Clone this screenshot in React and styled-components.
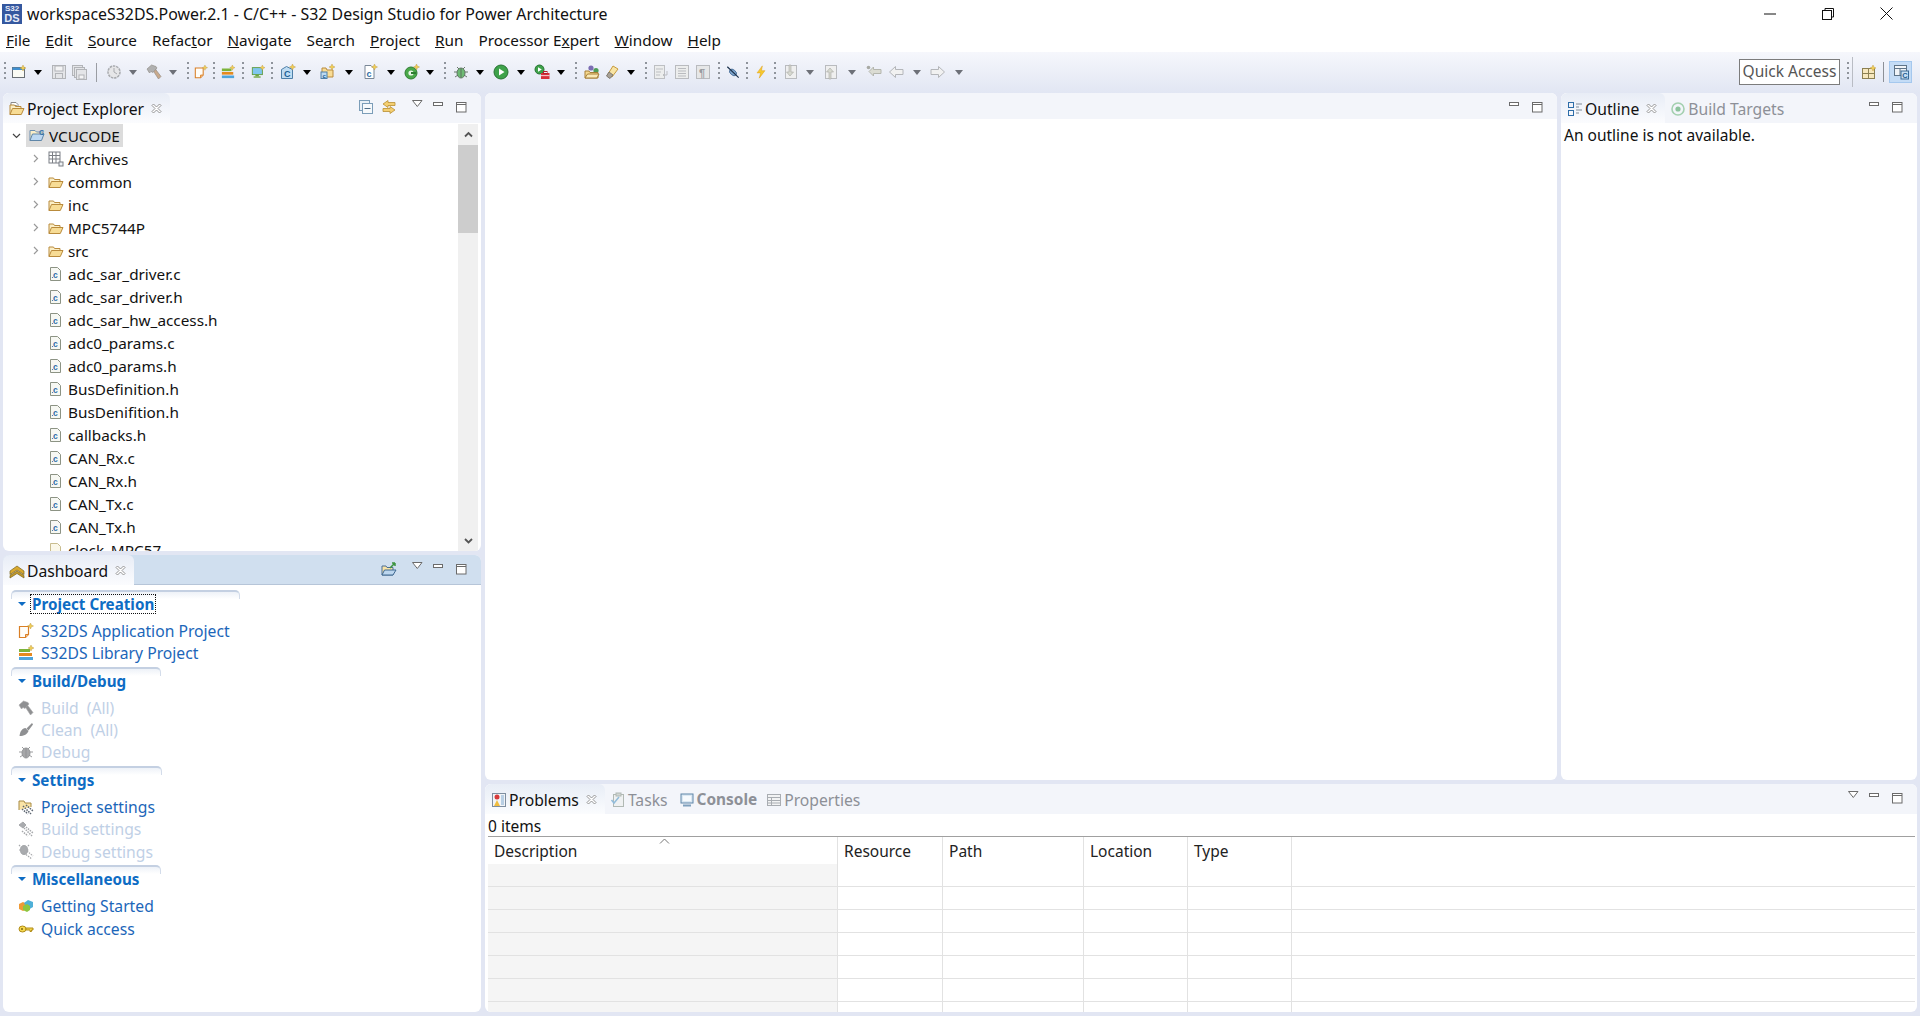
import React from 'react';
import styled, { createGlobalStyle } from 'styled-components';

const Global = createGlobalStyle`
  html, body { margin: 0; padding: 0; background: #fff; }
  body { font-family: "Noto Sans", "Open Sans", sans-serif; font-size: 15.5px; color: #111; }
  * { box-sizing: border-box; }
`;

const Frame = styled.div`
  width: 1920px;
  height: 1016px;
  display: flex;
  flex-direction: column;
  overflow: hidden;
  background: #e2e6f3;
`;

const TitleBar = styled.div`
  height: 27px;
  flex: none;
  display: flex;
  align-items: center;
  background: #fff;
  padding-left: 2px;
  font-size: 15.9px;
`;

const AppLogo = styled.div`
  width: 20px;
  height: 20px;
  margin-right: 5px;
  background: #35589f;
  color: #e6ebf7;
  font-size: 8px;
  font-weight: 700;
  line-height: 8px;
  text-align: center;
  padding-top: 1px;
  font-family: "Liberation Sans", sans-serif;
`;

const LogoBig = styled.div`
  font-size: 11px;
  line-height: 10px;
`;

const WinControls = styled.div`
  margin-left: auto;
  display: flex;
  height: 100%;
  padding-right: 4px;
`;

const WinButton = styled.div`
  width: 58.5px;
  display: flex;
  align-items: center;
  justify-content: center;
`;

const MenuBar = styled.div`
  height: 25px;
  flex: none;
  display: flex;
  align-items: center;
  gap: 15px;
  padding: 1px 0 0 6px;
  background: #fff;
  font-size: 15.3px;
`;

const ToolBar = styled.div`
  height: 41px;
  flex: none;
  display: flex;
  align-items: center;
  background: linear-gradient(#f6f7fc, #e1e6f3);
  padding-bottom: 1px;
`;

const ToolSlot = styled.div`
  flex: none;
  width: ${p => p.$w}px;
  height: 24px;
  display: flex;
  align-items: center;
  justify-content: center;
`;

const Grip = styled.div`
  width: 2px;
  height: 20px;
  background: repeating-linear-gradient(#8f949c 0 2px, transparent 2px 5px);
`;

const ToolLine = styled.div`
  width: 1px;
  height: 19px;
  background: #9a9da3;
`;

const DropArrow = styled.div`
  width: 0;
  height: 0;
  border-left: 4.5px solid transparent;
  border-right: 4.5px solid transparent;
  border-top: 5px solid ${p => (p.$off ? '#6d7078' : '#000')};
`;

const QuickArea = styled.div`
  margin-left: auto;
  display: flex;
  align-items: center;
  padding-right: 8px;
`;

const QuickAccess = styled.div`
  width: 101px;
  height: 26px;
  border: 1px solid #7c7c7c;
  background: #fff;
  color: #555;
  font-size: 15.5px;
  line-height: 23px;
  text-align: center;
  white-space: nowrap;
`;

const PerspectiveGrip = styled.div`
  width: 10px;
  height: 30px;
  margin: 0 4px 0 3px;
  border-right: 1px solid #b9bcc4;
  display: flex;
  justify-content: center;
  align-items: center;
`;

const PerspectiveLine = styled.div`
  width: 1px;
  height: 20px;
  background: #8d9097;
  margin: 0 5px 0 3px;
`;

const PerspectiveBtn = styled.div`
  width: 23px;
  height: 22px;
  display: flex;
  align-items: center;
  justify-content: center;
  background: ${p => (p.$on ? '#c4dcf6' : 'transparent')};
  border: 1px solid ${p => (p.$on ? '#a5c8ee' : 'transparent')};
`;

const Workbench = styled.div`
  flex: 1;
  min-height: 0;
  display: grid;
  grid-template-columns: 478px 1fr;
  gap: 4px;
  padding: 0 3px 4px;
`;

const Column = styled.div`
  display: grid;
  min-height: 0;
  min-width: 0;
  grid-template-rows: ${p => p.$rows};
  gap: ${p => p.$gap}px;
`;

const EditorRow = styled.div`
  display: grid;
  min-height: 0;
  grid-template-columns: 1072px 1fr;
  gap: 4px;
`;

const Panel = styled.section`
  background: #fff;
  border-radius: 6px;
  overflow: hidden;
  display: flex;
  flex-direction: column;
  min-height: 0;
  min-width: 0;
`;

const PanelHead = styled.header`
  height: 30px;
  flex: none;
  display: flex;
  background: ${p => (p.$focus ? '#d0dfef' : '#f3f5fa')};
  border-bottom: ${p => (p.$focus ? '1px solid #b6c5d8' : 'none')};
`;

const Tab = styled.div`
  height: 30px;
  display: flex;
  align-items: center;
  padding: 1px ${p => (p.$active ? '8px' : '0')} 0 ${p => p.$pad || 6}px;
  border-radius: 6px 6px 0 0;
  color: ${p => (p.$active ? '#111' : '#8d9097')};
  font-weight: ${p => (p.$bold ? 700 : 400)};
  background: ${p => (p.$active ? 'linear-gradient(#e8edf6, #fbfcfe)' : 'transparent')};
  font-size: ${p => (p.$bold ? 15.4 : 15.7)}px;
  white-space: nowrap;
`;

const TabLabel = styled.span`
  margin: 0 ${p => (p.$gap === undefined ? 7 : p.$gap)}px 0 2px;
`;

const ViewActions = styled.div`
  margin-left: auto;
  display: flex;
  align-items: flex-start;
  padding: 2px 8px 0 0;
`;

const ViewBtn = styled.div`
  width: ${p => p.$w}px;
  height: 18px;
  margin-top: ${p => p.$drop || 0}px;
  display: flex;
  align-items: center;
  justify-content: center;
`;

const TreeArea = styled.div`
  flex: 1;
  min-height: 0;
  display: flex;
  padding: 1px 3px 0 0;
  font-size: 15.3px;
`;

const TreeList = styled.div`
  flex: 1;
  overflow: hidden;
`;

const TreeRow = styled.div`
  height: 23px;
  display: flex;
  align-items: center;
  white-space: nowrap;
`;

const Twisty = styled.div`
  flex: none;
  width: ${p => p.$w}px;
  display: flex;
  justify-content: flex-end;
  padding-right: ${p => p.$pr}px;
`;

const TreeIcon = styled.div`
  flex: none;
  width: 16px;
  height: 16px;
  margin-right: ${p => p.$gap}px;
  display: flex;
`;

const Selected = styled.div`
  display: flex;
  align-items: center;
  height: 23px;
  background: #dcdcdc;
  padding: 0 3px;
`;

const ScrollBar = styled.div`
  flex: none;
  width: 20px;
  background: #f0f0f0;
  display: flex;
  flex-direction: column;
  align-items: center;
`;

const ScrollEnd = styled.div`
  height: 21px;
  flex: none;
  display: flex;
  align-items: center;
  justify-content: center;
`;

const ScrollThumb = styled.div`
  width: 100%;
  height: 88px;
  flex: none;
  background: #cdcdcd;
`;

const ScrollRest = styled.div`
  flex: 1;
`;

const DashBody = styled.div`
  flex: 1;
  padding: 5px 8px 0;
`;

const Section = styled.div`
  margin-bottom: 2.6px;
`;

const SectionHead = styled.div`
  position: relative;
  width: ${p => p.$w}px;
  height: 26px;
  display: flex;
  align-items: center;
  padding: 2px 0 0 7px;
  color: #0e6cc4;
  font-weight: 700;
  font-size: 15.2px;
  white-space: nowrap;

  &::before {
    content: '';
    position: absolute;
    top: 0;
    left: 0;
    right: 0;
    height: 7px;
    border: 1px solid #d3dcea;
    border-top: 2px solid #c4d0e2;
    border-bottom: none;
    border-radius: 5px 5px 0 0;
    background: linear-gradient(#eef2f8, #fff);
  }
`;

const SectionTitle = styled.span`
  position: relative;
  margin-left: 5px;
  padding: 0 1px;
  line-height: 18px;
  outline: ${p => (p.$focus ? '1px dotted #111' : 'none')};
`;

const SectionCaret = styled.div`
  width: 0;
  height: 0;
  border-left: 4px solid transparent;
  border-right: 4px solid transparent;
  border-top: 4px solid #0e6cc4;
`;

const SectionLinks = styled.div`
  padding-top: 4px;
`;

const LinkRow = styled.div`
  height: 22.2px;
  display: flex;
  align-items: center;
  padding-left: 7px;
  color: ${p => (p.$off ? '#bfd0e6' : '#1c66b9')};
  font-size: 15.7px;
  white-space: pre;
`;

const LinkIcon = styled.div`
  width: 16px;
  height: 16px;
  margin-right: 7px;
  display: flex;
`;

const EditorHead = styled.div`
  height: 26px;
  flex: none;
  display: flex;
  background: #f3f5fa;
`;

const PlainText = styled.div`
  padding: 2px 0 0 3px;
  line-height: 21px;
`;

const ItemCount = styled.div`
  height: 23px;
  flex: none;
  padding-top: 1px;
  line-height: 22px;
  margin: 0 2px 0 3px;
  border-bottom: 1px solid #a0a0a0;
`;

const Table = styled.div`
  flex: 1;
  min-height: 0;
  overflow: hidden;
  margin: 0 2px 0 3px;
`;

const Line = styled.div`
  display: grid;
  grid-template-columns: 350px 105px 141px 104px 104px 1fr;
  height: ${p => p.$h}px;
  border-bottom: ${p => (p.$head ? 'none' : '1px solid #e2e2e2')};
`;

const Cell = styled.div`
  position: relative;
  border-right: ${p => (p.$last ? 'none' : '1px solid #e2e2e2')};
  padding: 5px 0 0 6px;
  background: ${p => (p.$shade ? '#f5f5f5' : 'transparent')};
  line-height: 19px;
  color: #222;
`;

const SortMark = styled.svg`
  position: absolute;
  left: 171px;
  top: 1px;
`;

/* ---------- drawings ---------- */

const Star = ({ x = 11, y = 3, c = '#f1cf58' }) => (
  <path d={`M${x} ${y - 3}l.9 2.1 2.1.9-2.1.9-.9 2.1-.9-2.1-2.1-.9 2.1-.9z`} fill={c} stroke="#b8923a" strokeWidth=".4" />
);

const Folder = () => (
  <g>
    <path d="M1 13.5V4h4.5l1 1.5H12V7" fill="#fbeec6" stroke="#b98b3c" />
    <path d="M1 13.5 3.5 7.5H15l-2.700 6z" fill="#f7dc95" stroke="#b98b3c" />
  </g>
);

const HAMMER_HEAD = 'M1 5 5.5 1 10 2.5 11 4 7 8.5 5 7.5 3.5 9z';
const HAMMER_HANDLE = 'M7 6.5 9 4.5 15 12.5 12.5 15z';

const Glyph = {
  newwin: <g><rect x="1.5" y="3.5" width="12" height="10" fill="#fbfbf4" stroke="#6a6f74" /><rect x="1.5" y="3.5" width="12" height="2.5" fill="#3f8fd0" /><Star x={12} y={4} /></g>,
  save: <g fill="none" stroke="#b2b4b8"><rect x="1.5" y="1.5" width="13" height="13" fill="#e4e5e8" /><rect x="4" y="2" width="8" height="5" fill="#f4f4f5" /><rect x="4.5" y="9.5" width="7" height="5" /></g>,
  saveall: <g fill="#e4e5e8" stroke="#b2b4b8"><rect x="1.5" y="1.5" width="10" height="10" /><rect x="3.5" y="3.5" width="10" height="10" /><rect x="5.5" y="5.5" width="10" height="10" /><rect x="8" y="11" width="5" height="4" fill="#f4f4f5" /></g>,
  gearclock: <g fill="#e6e6e8" stroke="#a8aaae"><circle cx="8" cy="8" r="6" strokeDasharray="2.5 .8" strokeWidth="1.5" /><path d="M8 4v4l3 2" fill="none" /></g>,
  hammer: <g stroke="#8c8680" strokeWidth=".6"><path d={HAMMER_HANDLE} fill="#c9a98c" /><path d={HAMMER_HEAD} fill="#b0b0b0" /></g>,
  newapp: <g><path d="M1.5 3.5h9v8l-3 3h-6z" fill="#fffdf8" stroke="#d97f26" strokeWidth="1.2" /><path d="M7.5 14.5v-3h3" fill="#f7c18a" stroke="#d97f26" /><Star x={12.5} y={3} /></g>,
  lib: <g><rect x="1" y="4" width="11" height="3" fill="#7db33a" /><rect x="1" y="8" width="13" height="3" fill="#e58a1f" /><rect x="1" y="12" width="14" height="3" fill="#4ea4dc" /><Star x={13} y={3} /></g>,
  monitor: <g><rect x="1.5" y="3" width="11.5" height="8" fill="#7fc6ee" stroke="#5e9a3b" /><rect x="5" y="11" width="4" height="2" fill="#6ea63e" /><rect x="3" y="13" width="8" height="1.5" fill="#6ea63e" /><Star x={13} y={3} /></g>,
  cproj: <g><path d="M1.5 14.5v-9l5-3 6 3v9z" fill="#bfdcf3" stroke="#4e7fa8" /><text x="4" y="13" fontSize="9" fontWeight="700" fill="#205f96" fontFamily="Liberation Sans">C</text><Star x={12.5} y={3} /></g>,
  cfolder: <g><path d="M2 13V4h4l1 2h6v7z" fill="#f9dc95" stroke="#b98b3c" /><rect x="1" y="8" width="6" height="6.5" fill="#bcdaf2" stroke="#4e7fa8" /><text x="2.5" y="13.5" fontSize="6" fontWeight="700" fill="#205f96" fontFamily="Liberation Sans">c</text><Star x={12} y={3} /></g>,
  cfile: <g><path d="M3 1.5h6l3 3v10H3z" fill="#fff" stroke="#7a8797" /><text x="4.5" y="12.5" fontSize="9" fontWeight="700" fill="#2f6da8" fontFamily="Liberation Sans">c</text><Star x={12.5} y={3} /></g>,
  gclass: <g><circle cx="7" cy="9" r="6" fill="#4aa84a" stroke="#2e7d32" /><circle cx="7" cy="9" r="2.6" fill="#e7f4e5" /><rect x="7" y="8" width="5" height="2" fill="#2e7d32" /><Star x={12.5} y={3} /></g>,
  bug: <g stroke="#5a6b5c" strokeWidth=".9"><path d="M4 3l2 2M12 3l-2 2M1 8h3M12 8h3M2 13l3-2M14 13l-3-2" fill="none" /><ellipse cx="8" cy="9" rx="4" ry="5" fill="#6dbb74" /><path d="M8 4.5v9" /></g>,
  run: <g><circle cx="8" cy="8" r="7" fill="#3ea24a" stroke="#277233" /><path d="M6 4.5 11.5 8 6 11.5z" fill="#fff" /></g>,
  ext: <g><circle cx="5.5" cy="5.5" r="4.5" fill="#3ea24a" stroke="#277233" /><path d="M4 3.2 7.8 5.5 4 7.8z" fill="#fff" /><rect x="7" y="9" width="8.5" height="6" fill="#d7303a" /><rect x="9.5" y="7.5" width="3.5" height="2" fill="none" stroke="#b71f28" /><rect x="7" y="11.3" width="8.5" height=".8" fill="#fff" /></g>,
  openres: <g><circle cx="7" cy="4" r="2.6" fill="#7c6db3" /><circle cx="12" cy="6.5" r="2.6" fill="#4e9d57" /><path d="M1 14V7h4l1 1.5h8V14z" fill="#f6d98e" stroke="#a77f37" /><path d="M1 14l2.5-4H15l-2 4z" fill="#fae9b6" stroke="#a77f37" /></g>,
  torch: <g><path d="M9 2l5 3-6 8-4-3z" fill="#f8e4a5" stroke="#c79a3c" /><path d="M5 8l4 3-3 3.5L2.500 12z" fill="#a8a196" stroke="#7f796f" /></g>,
  fmt1: <g fill="none" stroke="#bdbfc3"><rect x="1.5" y="1.5" width="10" height="13" fill="#eceded" /><path d="M3 5h7M3 8h5M3 11h4" /><path d="M14 7v4h-4m2-2-2 2 2 2" /></g>,
  fmt2: <g fill="#eceded" stroke="#b9bbbf"><rect x="1.5" y="1.5" width="13" height="13" /><path d="M4 4.5h8M4 7h8M4 9.5h8M4 12h8" fill="none" /></g>,
  para: <g><rect x="1.5" y="1.5" width="13" height="13" fill="#e6e7e8" stroke="#b9bbbf" /><text x="4" y="12.5" fontSize="11" fontWeight="700" fill="#9a9ca0" fontFamily="Liberation Sans">¶</text></g>,
  noconn: <g><ellipse cx="8" cy="8.5" rx="4.5" ry="3" fill="#7fa6cf" stroke="#4a6f98" transform="rotate(40 8 8.5)" /><path d="M1.5 2 14.5 14.5" stroke="#1a2f4a" strokeWidth="1.3" /></g>,
  bolt: <path d="M9.5 1 3.5 9h4L6 15l6.500-8.500h-4z" fill="#f6c92e" stroke="#e0a21a" strokeWidth=".6" />,
  nextann: <g><rect x="2.5" y="1.5" width="11" height="13" fill="#efefef" stroke="#b9bbbf" /><path d="M6 1v7H3.500L7 12l3.500-4H8V1z" fill="#d6d8cf" stroke="#a8aaa4" strokeWidth=".6" /></g>,
  prevann: <g><rect x="2.5" y="1.5" width="11" height="13" fill="#efefef" stroke="#b9bbbf" /><path d="M6 15V8H3.500L7 4l3.500 4H8v7z" fill="#d6d8cf" stroke="#a8aaa4" strokeWidth=".6" /></g>,
  lastedit: <g><path d="M15 5.5H7.5V3L3 7.5 7.5 12V9.5H15z" fill="#dbdcd3" stroke="#b4b6ae" /><circle cx="2.5" cy="3.5" r="1.8" fill="#a8aaa4" /></g>,
  back: <path d="M15 5.5H7.5v-3L1.500 8l6 5.500v-3H15z" fill="#f1f1f1" stroke="#b4b6ba" />,
  forward: <path d="M1 5.5h7.500v-3l6 5.500-6 5.500v-3H1z" fill="#f1f1f1" stroke="#b4b6ba" />,
  collapse: <g fill="#e8f0f6" stroke="#7b9db8"><rect x="1.5" y="1.5" width="10" height="10" /><rect x="4.5" y="4.5" width="10" height="10" fill="#f6f9fb" /><path d="M6.5 9.5h6" stroke="#4f6f88" /></g>,
  link: <g fill="#f4cf71" stroke="#b98f32" strokeWidth=".8"><path d="M7 1.5 2 5l5 3.500v-2h7v-3H7z" /><path d="M9 7.5l5 3.500-5 3.500v-2H2v-3h7z" /></g>,
  perspective: <g><rect x="1.5" y="4.5" width="12" height="10" fill="#f6e7bd" stroke="#8c8052" /><path d="M1.5 9.5h12M7.5 4.5v10" stroke="#8c8052" /><Star x={12} y={4} /></g>,
  ccpp: <g><rect x="1.5" y="1.5" width="12" height="10" fill="#f0f4f8" stroke="#5f7488" /><path d="M1.5 4.5h12M7 4.5v7" stroke="#5f7488" /><rect x="8" y="7" width="7.5" height="8" fill="#c7e0f4" stroke="#3a6a94" /><text x="9.3" y="13.6" fontSize="7.5" fontWeight="700" fill="#245d8f" fontFamily="Liberation Sans">C</text></g>,
  explorer: <g><path d="M2 1.5h5l2 2v5H2z" fill="#fff" stroke="#8a8a8a" /><path d="M4.5 4.5h3v4" fill="#eee" stroke="#8a8a8a" /><Folder /></g>,
  dashboard: <g fill="#d9a92e" stroke="#7a6420" strokeWidth=".7"><path d="M1 8 8 3l7 5v3.500L8 7l-7 4.500z" /><path d="M1 12.5 8 8l7 4.500V15L8 10.500 1 15z" fill="#c49a28" /></g>,
  outline: <g fill="none" stroke="#2e6da8"><rect x="1.5" y="1.5" width="5" height="5" /><rect x="1.5" y="9.5" width="5" height="5" /><path d="M9 3h6M9 6h3M9 9h6M9 12h3" stroke="#7c8a98" /></g>,
  target: <g fill="none"><circle cx="8" cy="8" r="6" stroke="#a4d0b0" strokeWidth="1.6" /><circle cx="8" cy="8" r="2.6" fill="#8cc39c" /></g>,
  problems: <g><rect x="1.5" y="1.5" width="13" height="13" fill="#f2f4f7" stroke="#7e8ea0" /><circle cx="6" cy="5" r="2.5" fill="#d83a3a" /><path d="M3 14l3-6 3 6z" fill="#f1bd3f" /><rect x="10" y="3" width="3" height="10" fill="#b9cfe4" /></g>,
  tasks: <g opacity=".65"><rect x="3.5" y="2.5" width="10" height="12" fill="#eef0ee" stroke="#8e9a90" /><rect x="6" y="1" width="5" height="3" fill="#bfc7bf" stroke="#8e9a90" /><path d="M1.5 8l2.500 3 5-6" fill="none" stroke="#5f9fcb" strokeWidth="1.5" /></g>,
  console: <g><rect x="2" y="2" width="12" height="9" fill="#dbe8f3" stroke="#5f86a8" /><rect x="4" y="4" width="8" height="5" fill="#f6fafd" /><rect x="4" y="12.5" width="8" height="2" fill="#7fa0bd" /></g>,
  props: <g fill="#f2f3f4" stroke="#a9adb2"><rect x="1.5" y="2.5" width="13" height="11" /><path d="M1.5 5.500h13M1.500 8.500h13M1.500 11h13M5.500 5.500v8" fill="none" /></g>,
  openproj: <g><path d="M1 14V5h4l1 1.500h6V14z" fill="#f9e3a6" stroke="#4d6e94" /><path d="M1 14l2.500-5H15l-3 5z" fill="#bcd6ee" stroke="#3f6890" /><path d="M9 7l5-5M14 2h-3M14 2v3" stroke="#3d9440" strokeWidth="1.5" fill="none" /></g>,
  archives: <g fill="#fff" stroke="#7b7f85"><rect x="1" y="1" width="11" height="11" /><path d="M1 4.500h11M1 8h11M4.500 1v11M8 1v11" fill="none" /><rect x="11" y="11" width="4" height="4" fill="#eef1f4" /></g>,
  folder: <Folder />,
  project: <g><path d="M1 12.5v-10h5L7.500 4H14v2" fill="#fbeec6" stroke="#6c8fb0" /><path d="M1 12.5 3.500 6H15l-2.500 6.500z" fill="#bcd8f2" stroke="#5f86a8" /><text x="10" y="6.5" fontSize="7" fontWeight="700" fill="#2e6da8" fontFamily="Liberation Sans">C</text></g>,
  cf: <g><path d="M2.5 1.5h7l3 3v10h-10z" fill="#f7f8f3" stroke="#8c9384" /><text x="5" y="12" fontSize="8.5" fontWeight="700" fill="#2f6da8" fontFamily="Liberation Sans">c</text><circle cx="4.5" cy="11.5" r=".6" fill="#2f6da8" /></g>,
  cfPale: <path d="M2.5 1.500h7l3 3v10h-10z" fill="#fbf8ea" stroke="#c9bd8f" />,
  hammerOff: <g fill="#8f9092" stroke="#a9a9ab" strokeWidth=".6"><path d={HAMMER_HANDLE} /><path d={HAMMER_HEAD} /></g>,
  clean: <g fill="#8f9092"><path d="M14 1 8.500 6.500l2 2L15 2.500z" /><path d="M7.500 6C4 6.500 2 9.500 1.500 14c4.500 0 8-2 9-5z" /></g>,
  debug: <g stroke="#8f9092" strokeWidth=".9"><path d="M4 3l2 2M12 3l-2 2M1 8h3M12 8h3M2 13l3-2M14 13l-3-2" fill="none" /><ellipse cx="8" cy="9" rx="4" ry="5" fill="#a6a7a9" /><path d="M8 4.500v9" /></g>,
  setproj: <g><path d="M1 11V2h5l1 2h6v4" fill="#f9e3a6" stroke="#a88b44" /><path d="M5 7l8 8M8 6l7 6M4 10l6 5" stroke="#5b6470" strokeWidth="1.5" strokeDasharray="1.500 1" /></g>,
  setbuild: <g stroke="#a6a8ab"><path d="M1 4l4-3 3 3-3 3z" fill="#a9abae" /><path d="M6 7l8 8M8 6l7 6M4 10l6 5" strokeWidth="1.5" strokeDasharray="1.500 1" /></g>,
  setdebug: <g stroke="#a6a8ab"><ellipse cx="6" cy="6" rx="3.5" ry="4.5" fill="#a9abae" /><path d="M1 1l2 2M11 1 9 3M1 6h2M9 6h2M6 9l8 6M9 7l6 5" strokeWidth="1.2" strokeDasharray="1.500 1" /></g>,
  started: <g><path d="M1 6l4-2 4 2v5l-4 2-4-2z" fill="#ef9a35" /><path d="M6 5l4-3 5 2v5l-5 3z" fill="#4fb0d8" /><path d="M5 8l4-2 3 2v4l-3 2-4-2z" fill="#8cc63f" /></g>,
  key: <g fill="none" stroke="#b08b17"><ellipse cx="4.5" cy="8" rx="3.5" ry="3" fill="#f6d94e" /><circle cx="4" cy="8" r="1" fill="#7d6310" stroke="none" /><path d="M8 7h7v2h-1.500v1.500H12V9H8z" fill="#f6d94e" /></g>,
};

const Icon = ({ name, size = 16 }) => (
  <svg width={size} height={size} viewBox="0 0 16 16">{Glyph[name]}</svg>
);

const Chevron = ({ dir = 'right', color = '#9a9a9a', weight = 1.2 }) => {
  const d = { right: 'M3 1l3.500 3.500L3 8', down: 'M1 3l3.500 3.500L8 3', up: 'M1 6.500 4.500 3 8 6.500' }[dir];
  return (
    <svg width="9" height="9" viewBox="0 0 9 9" fill="none" stroke={color} strokeWidth={weight}>
      <path d={d} />
    </svg>
  );
};

const ViewMenuIcon = () => (
  <svg width="11" height="8" viewBox="0 0 11 8"><path d="M.5.500H10L5.300 6.500z" fill="#fff" stroke="#6b6b6b" /></svg>
);

const MinIcon = () => (
  <svg width="11" height="5" viewBox="0 0 11 5"><rect x=".5" y=".5" width="9" height="3" fill="#fff" stroke="#6b6b6b" /></svg>
);

const MaxIcon = () => (
  <svg width="11" height="11" viewBox="0 0 11 11"><rect x=".5" y=".5" width="9.5" height="9.5" fill="#fff" stroke="#6b6b6b" /><path d="M.5 2.500H10" stroke="#6b6b6b" /></svg>
);

const CloseTab = () => (
  <svg width="11" height="11" viewBox="0 0 11 11" fill="#fff" stroke="#8a8a8a" strokeWidth=".9">
    <path d="M1 2.500 2.500 1l3 3 3-3L10 2.500l-3 3 3 3L8.500 10l-3-3-3 3L1 8.500l3-3z" />
  </svg>
);

/* ---------- data ---------- */

const toolItems = [
  ['grip', 2], ['newwin', 18], ['arrow', 38], ['save', 58], ['saveall', 81], ['line', 96], ['gearclock', 113], ['arrowOff', 133],
  ['hammer', 154], ['arrowOff', 176], ['grip', 187], ['newapp', 201], ['grip', 215], ['lib', 226], ['grip', 243],
  ['monitor', 258], ['grip', 271], ['cproj', 287], ['arrow', 306], ['cfolder', 329], ['arrow', 348], ['cfile', 371],
  ['arrow', 390], ['gclass', 412], ['arrow', 432], ['grip', 444], ['bug', 460], ['arrow', 479], ['run', 501], ['arrow', 521],
  ['ext', 541], ['arrow', 563], ['grip', 575], ['openres', 589], ['torch', 613], ['arrow', 633], ['grip', 645],
  ['fmt1', 659], ['fmt2', 682], ['para', 705], ['grip', 719], ['noconn', 733], ['grip', 747], ['bolt', 761], ['grip', 775],
  ['nextann', 789], ['arrowOff', 810], ['prevann', 830], ['arrowOff', 852], ['lastedit', 873], ['back', 897], ['arrowOff', 917],
  ['forward', 938], ['arrowOff', 959],
];

const folders = ['common', 'inc', 'MPC5744P', 'src'];

const files = [
  'adc_sar_driver.c', 'adc_sar_driver.h', 'adc_sar_hw_access.h', 'adc0_params.c', 'adc0_params.h', 'BusDefinition.h',
  'BusDenifition.h', 'callbacks.h', 'CAN_Rx.c', 'CAN_Rx.h', 'CAN_Tx.c', 'CAN_Tx.h',
];

const menus = [
  ['', 'F', 'ile'], ['', 'E', 'dit'], ['', 'S', 'ource'], ['Refac', 't', 'or'], ['', 'N', 'avigate'], ['Se', 'a', 'rch'],
  ['', 'P', 'roject'], ['', 'R', 'un'], ['Processor E', 'x', 'pert'], ['', 'W', 'indow'], ['', 'H', 'elp'],
];

const dashboard = [
  { title: 'Project Creation', w: 229, focus: true, links: [['newapp', 'S32DS Application Project'], ['lib', 'S32DS Library Project']] },
  { title: 'Build/Debug', w: 150, links: [['hammerOff', 'Build  (All)', true], ['clean', 'Clean  (All)', true], ['debug', 'Debug', true]] },
  { title: 'Settings', w: 151, links: [['setproj', 'Project settings'], ['setbuild', 'Build settings', true], ['setdebug', 'Debug settings', true]] },
  { title: 'Miscellaneous', w: 150, links: [['started', 'Getting Started'], ['key', 'Quick access']] },
];

const columns = ['Description', 'Resource', 'Path', 'Location', 'Type', ''];

const ToolItem = ({ kind, w }) => {
  let inner;
  if (kind === 'grip') inner = <Grip />;
  else if (kind === 'line') inner = <ToolLine />;
  else if (kind === 'arrow') inner = <DropArrow />;
  else if (kind === 'arrowOff') inner = <DropArrow $off />;
  else inner = <Icon name={kind} />;
  return <ToolSlot $w={w}>{inner}</ToolSlot>;
};

const Tools = () => (
  <>
    {toolItems.map(([kind, x], i) => {
      const prev = i === 0 ? 0 : (toolItems[i - 1][1] + x) / 2;
      const next = i === toolItems.length - 1 ? x + 10 : (x + toolItems[i + 1][1]) / 2;
      return <ToolItem key={i} kind={kind} w={next - prev} />;
    })}
  </>
);

const ViewButtons = ({ menu, children }) => (
  <ViewActions>
    {children}
    {menu && <ViewBtn $w={20}><ViewMenuIcon /></ViewBtn>}
    <ViewBtn $w={22}><MinIcon /></ViewBtn>
    <ViewBtn $w={24} $drop={3}><MaxIcon /></ViewBtn>
  </ViewActions>
);

const Explorer = () => (
  <Panel>
    <PanelHead>
      <Tab $active><Icon name="explorer" /><TabLabel>Project Explorer</TabLabel><CloseTab /></Tab>
      <ViewButtons menu>
        <ViewBtn $w={23} $drop={3}><Icon name="collapse" /></ViewBtn>
        <ViewBtn $w={23} $drop={3}><Icon name="link" /></ViewBtn>
        <ViewBtn $w={7} />
      </ViewButtons>
    </PanelHead>
    <TreeArea>
      <TreeList>
        <TreeRow>
          <Twisty $w={23} $pr={5}><Chevron dir="down" color="#444" /></Twisty>
          <Selected><TreeIcon $gap={4}><Icon name="project" /></TreeIcon>VCUCODE</Selected>
        </TreeRow>
        <TreeRow>
          <Twisty $w={45} $pr={8}><Chevron /></Twisty>
          <TreeIcon $gap={4}><Icon name="archives" /></TreeIcon>Archives
        </TreeRow>
        {folders.map(f => (
          <TreeRow key={f}>
            <Twisty $w={45} $pr={8}><Chevron /></Twisty>
            <TreeIcon $gap={4}><Icon name="folder" /></TreeIcon>{f}
          </TreeRow>
        ))}
        {files.map(f => (
          <TreeRow key={f}>
            <Twisty $w={45} $pr={8} />
            <TreeIcon $gap={4}><Icon name="cf" /></TreeIcon>{f}
          </TreeRow>
        ))}
        <TreeRow>
          <Twisty $w={45} $pr={8} />
          <TreeIcon $gap={4}><Icon name="cfPale" /></TreeIcon>clock_MPC57
        </TreeRow>
      </TreeList>
      <ScrollBar>
        <ScrollEnd><Chevron dir="up" color="#555" weight={1.8} /></ScrollEnd>
        <ScrollThumb />
        <ScrollRest />
        <ScrollEnd><Chevron dir="down" color="#555" weight={1.8} /></ScrollEnd>
      </ScrollBar>
    </TreeArea>
  </Panel>
);

const Dashboard = () => (
  <Panel>
    <PanelHead $focus>
      <Tab $active><Icon name="dashboard" /><TabLabel>Dashboard</TabLabel><CloseTab /></Tab>
      <ViewButtons menu>
        <ViewBtn $w={23} $drop={3}><Icon name="openproj" /></ViewBtn>
        <ViewBtn $w={7} />
      </ViewButtons>
    </PanelHead>
    <DashBody>
      {dashboard.map(s => (
        <Section key={s.title}>
          <SectionHead $w={s.w}><SectionCaret /><SectionTitle $focus={s.focus}>{s.title}</SectionTitle></SectionHead>
          <SectionLinks>
            {s.links.map(([icon, label, off]) => (
              <LinkRow key={label} $off={off}><LinkIcon><Icon name={icon} /></LinkIcon>{label}</LinkRow>
            ))}
          </SectionLinks>
        </Section>
      ))}
    </DashBody>
  </Panel>
);

const Problems = () => (
  <Panel>
    <PanelHead>
      <Tab $active><Icon name="problems" /><TabLabel>Problems</TabLabel><CloseTab /></Tab>
      <Tab $pad={5}><Icon name="tasks" /><TabLabel $gap={0}>Tasks</TabLabel></Tab>
      <Tab $pad={11} $bold><Icon name="console" /><TabLabel $gap={0}>Console</TabLabel></Tab>
      <Tab $pad={9}><Icon name="props" /><TabLabel $gap={0}>Properties</TabLabel></Tab>
      <ViewButtons menu />
    </PanelHead>
    <ItemCount>0 items</ItemCount>
    <Table>
      <Line $h={27} $head>
        {columns.map((c, i) => (
          <Cell key={i} $last={i === 5}>
            {c}
            {i === 0 && (
              <SortMark width="11" height="6" viewBox="0 0 11 6" fill="none" stroke="#777"><path d="M1 5.500 5.500 1 10 5.500" /></SortMark>
            )}
          </Cell>
        ))}
      </Line>
      {[0, 1, 2, 3, 4, 5, 6].map(r => (
        <Line key={r} $h={23}>
          {columns.map((c, i) => <Cell key={i} $last={i === 5} $shade={i === 0} />)}
        </Line>
      ))}
    </Table>
  </Panel>
);

export default function App() {
  return (
    <Frame>
      <Global />
      <TitleBar>
        <AppLogo>S32<LogoBig>DS</LogoBig></AppLogo>
        workspaceS32DS.Power.2.1 - C/C++ - S32 Design Studio for Power Architecture
        <WinControls>
          <WinButton>
            <svg width="12" height="12" viewBox="0 0 12 12" stroke="#111"><path d="M0 6h12" /></svg>
          </WinButton>
          <WinButton>
            <svg width="12" height="12" viewBox="0 0 12 12" fill="none" stroke="#111"><rect x=".5" y="2.5" width="9" height="9" /><path d="M3 2.500V.5h8.500V9h-2" /></svg>
          </WinButton>
          <WinButton>
            <svg width="13" height="13" viewBox="0 0 13 13" stroke="#111"><path d="M.5.500l12 12M12.500.500l-12 12" /></svg>
          </WinButton>
        </WinControls>
      </TitleBar>
      <MenuBar>
        {menus.map(([a, b, c]) => <span key={a + b + c}>{a}<u>{b}</u>{c}</span>)}
      </MenuBar>
      <ToolBar>
        <Tools />
        <QuickArea>
          <QuickAccess>Quick Access</QuickAccess>
          <PerspectiveGrip><Grip /></PerspectiveGrip>
          <PerspectiveBtn><Icon name="perspective" /></PerspectiveBtn>
          <PerspectiveLine />
          <PerspectiveBtn $on><Icon name="ccpp" /></PerspectiveBtn>
        </QuickArea>
      </ToolBar>
      <Workbench>
        <Column $rows="458px 1fr" $gap={4}>
          <Explorer />
          <Dashboard />
        </Column>
        <Column $rows="687px 1fr" $gap={4}>
          <EditorRow>
            <Panel>
              <EditorHead><ViewButtons /></EditorHead>
            </Panel>
            <Panel>
              <PanelHead>
                <Tab $active><Icon name="outline" /><TabLabel>Outline</TabLabel><CloseTab /></Tab>
                <Tab $pad={5}><Icon name="target" /><TabLabel $gap={0}>Build Targets</TabLabel></Tab>
                <ViewButtons />
              </PanelHead>
              <PlainText>An outline is not available.</PlainText>
            </Panel>
          </EditorRow>
          <Problems />
        </Column>
      </Workbench>
    </Frame>
  );
}
